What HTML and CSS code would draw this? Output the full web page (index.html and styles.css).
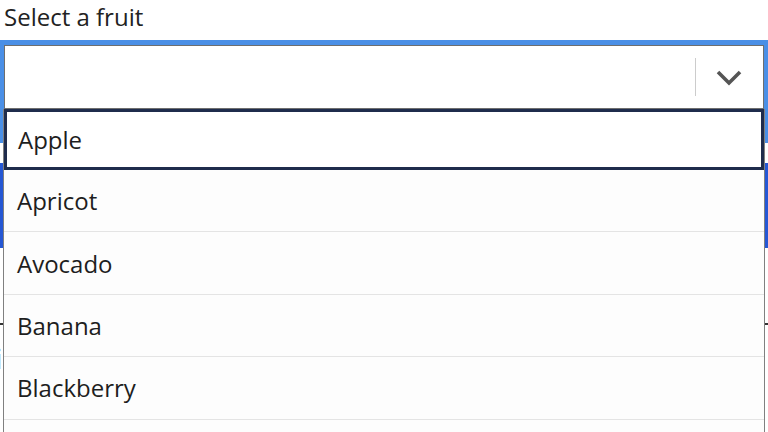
FILE: index.html
```html
<!DOCTYPE html>
<html lang="en">
<head>
<meta charset="utf-8">
<title>Select a fruit</title>
<link rel="stylesheet" href="styles.css">
</head>
<body>
<div class="page">
  <label class="label" id="fruit-label">Select a fruit</label>
  <div class="field">
    <div class="combo" role="combobox" aria-expanded="true" aria-labelledby="fruit-label">
      <div class="value"></div>
      <div class="indicators">
        <span class="sep"></span>
        <svg class="chevron" width="28" height="20" viewBox="0 0 28 20" aria-hidden="true">
          <path d="M3 4 L14 15 L25 4" fill="none" stroke="#555" stroke-width="3.6" stroke-linecap="butt" stroke-linejoin="miter"/>
        </svg>
      </div>
    </div>
    <ul class="listbox" role="listbox">
      <li class="option active" role="option">Apple</li>
      <li class="option" role="option">Apricot</li>
      <li class="option" role="option">Avocado</li>
      <li class="option" role="option">Banana</li>
      <li class="option" role="option">Blackberry</li>
      <li class="option" role="option">Blueberry</li>
    </ul>
  </div>
  <div class="gap"></div>
  <div class="banner"></div>
  <div class="after">
    <hr class="rule">
    <p class="note">information</p>
  </div>
</div>
</body>
</html>
```

FILE: styles.css
```css
html, body {
  margin: 0;
  padding: 0;
  background: #ffffff;
}

html {
  overflow: hidden;
}

body {
  font-family: "Open Sans", "DejaVu Sans", sans-serif;
  color: #1f1f1f;
}

.page {
  width: 768px;
  height: 600px;
}

.label {
  display: block;
  font-size: 24px;
  line-height: 33px;
  padding-left: 4px;
  height: 40px;
  color: #222222;
}

.field {
  position: relative;
  background: #4a8fe6;
  height: 103px;
  padding: 5px 4px 0 4px;
  box-sizing: border-box;
}

.combo {
  display: flex;
  align-items: center;
  width: 760px;
  height: 64px;
  box-sizing: border-box;
  border: 1px solid #6e6e6e;
  background: #ffffff;
}

.value {
  flex: 1;
}

.indicators {
  display: flex;
  align-items: center;
  height: 100%;
}

.sep {
  width: 1px;
  height: 38px;
  background: #cccccc;
  margin-right: 19px;
}

.chevron {
  display: block;
  margin-right: 20px;
  margin-top: 1px;
}

.listbox {
  position: absolute;
  top: 69px;
  left: 3px;
  width: 762px;
  margin: 0;
  padding: 0;
  list-style: none;
  background: #fdfdfd;
  border-left: 1px solid #808080;
  border-right: 1px solid #808080;
  box-sizing: border-box;
  z-index: 2;
}

.option {
  height: 62.4px;
  box-sizing: border-box;
  display: flex;
  align-items: center;
  padding-left: 13px;
  font-size: 24px;
  color: #1e1e1e;
  border-bottom: 1px solid #e4e4e4;
  background: #fdfdfd;
}

.option.active {
  height: 61px;
  border: 3px solid #1f2c4c;
  padding-left: 11px;
  background: #ffffff;
}

.gap {
  height: 20px;
}

.banner {
  height: 85px;
  background: #2557d4;
}

.after {
  padding-top: 75px;
}

.rule {
  margin: 0;
  border: 0;
  height: 2px;
  background: #333333;
}

.note {
  margin: 16px 0 0 -6px;
  font-size: 26px;
  font-weight: 700;
  color: #222222;
}
```
